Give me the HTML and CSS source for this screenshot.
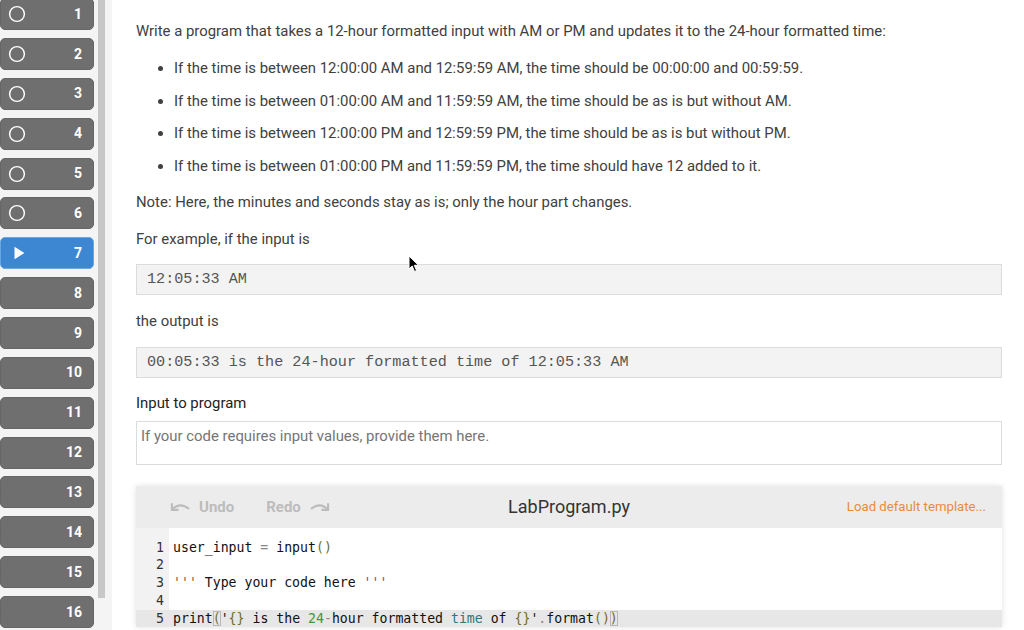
FILE: index.html
```html
<!DOCTYPE html>
<html>
<head>
<meta charset="utf-8">
<link rel="stylesheet" href="styles.css">
</head>
<body>
<div class="app">
  <aside class="sidebar">
    <div class="steps">
      <div class="step"><svg class="ring" viewBox="0 0 20 20"><circle cx="10" cy="10" r="8.2"/></svg><span class="num">1</span></div>
      <div class="step"><svg class="ring" viewBox="0 0 20 20"><circle cx="10" cy="10" r="8.2"/></svg><span class="num">2</span></div>
      <div class="step"><svg class="ring" viewBox="0 0 20 20"><circle cx="10" cy="10" r="8.2"/></svg><span class="num">3</span></div>
      <div class="step"><svg class="ring" viewBox="0 0 20 20"><circle cx="10" cy="10" r="8.2"/></svg><span class="num">4</span></div>
      <div class="step"><svg class="ring" viewBox="0 0 20 20"><circle cx="10" cy="10" r="8.2"/></svg><span class="num">5</span></div>
      <div class="step"><svg class="ring" viewBox="0 0 20 20"><circle cx="10" cy="10" r="8.2"/></svg><span class="num">6</span></div>
      <div class="step active"><svg class="play" viewBox="0 0 20 20"><path d="M5 3 L16 10 L5 17 Z"/></svg><span class="num">7</span></div>
      <div class="step"><span class="num">8</span></div>
      <div class="step"><span class="num">9</span></div>
      <div class="step"><span class="num">10</span></div>
      <div class="step"><span class="num">11</span></div>
      <div class="step"><span class="num">12</span></div>
      <div class="step"><span class="num">13</span></div>
      <div class="step"><span class="num">14</span></div>
      <div class="step"><span class="num">15</span></div>
      <div class="step"><span class="num">16</span></div>
    </div>
    <div class="scrollbar"></div>
  </aside>
  <main class="content">
    <p class="p-intro">Write a program that takes a 12-hour formatted input with AM or PM and updates it to the 24-hour formatted time:</p>
    <ul class="rules">
      <li>If the time is between 12:00:00 AM and 12:59:59 AM, the time should be 00:00:00 and 00:59:59.</li>
      <li>If the time is between 01:00:00 AM and 11:59:59 AM, the time should be as is but without AM.</li>
      <li>If the time is between 12:00:00 PM and 12:59:59 PM, the time should be as is but without PM.</li>
      <li>If the time is between 01:00:00 PM and 11:59:59 PM, the time should have 12 added to it.</li>
    </ul>
    <p class="p-note">Note: Here, the minutes and seconds stay as is; only the hour part changes.</p>
    <p class="p-ex">For example, if the input is</p>
    <pre class="sample">12:05:33 AM</pre>
    <p class="p-out">the output is</p>
    <pre class="sample">00:05:33 is the 24-hour formatted time of 12:05:33 AM</pre>
    <div class="input-label">Input to program</div>
    <div class="input-box">If your code requires input values, provide them here.</div>
    <section class="editor">
      <div class="toolbar">
        <div class="tb-left">
          <span class="tb-btn"><svg class="ico" viewBox="0 0 22 12"><path d="M2 2 V9 H9"/><path d="M2.5 8.5 C7 3.5 13 2.5 20 8"/></svg>Undo</span>
          <span class="tb-btn redo">Redo<svg class="ico" viewBox="0 0 22 12"><path d="M20 2 V9 H13"/><path d="M19.5 8.5 C15 3.5 9 2.5 2 8"/></svg></span>
        </div>
        <div class="filename">LabProgram.py</div>
        <div class="tb-right"><span class="load">Load default template...</span></div>
      </div>
      <div class="code">
        <div class="line"><span class="gut">1</span><span class="src">user_input <span class="op">=</span> input<span class="br">()</span></span></div>
        <div class="line"><span class="gut">2</span><span class="src"></span></div>
        <div class="line"><span class="gut">3</span><span class="src"><span class="str">'''</span> Type your code here <span class="str">'''</span></span></div>
        <div class="line"><span class="gut">4</span><span class="src"></span></div>
        <div class="line cur"><span class="gut">5</span><span class="src">print<span class="br match">(</span>'<span class="br">{}</span> is the <span class="num2">24</span><span class="op">-</span>hour formatted <span class="kw">time</span> of <span class="br">{}</span>'<span class="op">.</span>format<span class="br">()</span><span class="br match">)</span></span></div>
      </div>
    </section>
  </main>
</div>
<svg class="pointer" viewBox="0 0 12 18"><path d="M1 1 L1 14 L4.2 11 L6.5 16.5 L8.6 15.6 L6.3 10.3 L10.5 10.3 Z"/></svg>
</body>
</html>
```
FILE: styles.css
```css
* { box-sizing: border-box; }
html, body { margin: 0; padding: 0; }
body {
  width: 1024px;
  height: 630px;
  overflow: hidden;
  background: #ffffff;
  font-family: Roboto, "Liberation Sans", sans-serif;
  color: #404040;
  position: relative;
}
.app { display: flex; height: 630px; }

.sidebar {
  width: 112px;
  flex: none;
  background: #f4f4f4;
  display: flex;
  align-items: flex-start;
}
.steps {
  width: 94px;
  display: flex;
  flex-direction: column;
  gap: 7.86px;
  margin-top: -1.86px;
}
.step {
  height: 32px;
  flex: none;
  border-radius: 5px;
  background: #6f6f6f;
  color: #fff;
  display: flex;
  align-items: center;
  padding: 0 11px 0 7px;
  border: 1px solid #666;
}
.step.active {
  background: #3d87d2;
  border-color: #6aa6e0;
}
.ring { width: 18px; height: 18px; fill: none; stroke: #fff; stroke-width: 1.6; }
.play { width: 18px; height: 18px; fill: #fff; margin-left: 2px; }
.num {
  margin-left: auto;
  font-weight: 700;
  font-size: 14px;
  margin-top: -1px;
}
.scrollbar {
  width: 7px;
  height: 598px;
  margin-left: 4px;
  background: #c7c7c7;
}

.content {
  flex: 1;
  padding: 0 22px 0 24px;
  font-size: 14.9px;
  line-height: 20px;
}
.content p { margin: 0; }
.p-intro { margin-top: 21px !important; }
.rules {
  margin: 17px 0 0;
  padding-left: 38px;
}
.rules li { margin-bottom: 12.5px; }
.rules li:last-child { margin-bottom: 0; }
.p-note { margin-top: 16px !important; }
.p-ex { margin-top: 17px !important; }
.p-out { margin-top: 16px !important; }
.sample {
  margin: 15px 0 0;
  height: 31px;
  padding: 5px 10px;
  background: #f3f3f3;
  border: 1px solid #dcdcdc;
  font-family: "Liberation Mono", monospace;
  font-size: 15.15px;
  line-height: 19px;
  color: #555;
}
.p-out + .sample { margin-top: 16px; }
.input-label {
  margin-top: 15px;
  color: #222;
}
.input-box {
  margin-top: 8px;
  height: 44px;
  border: 1px solid #d9dddd;
  padding: 4px 4px;
  color: #757575;
}

.editor {
  margin-top: 21px;
  box-shadow: 0 0 6px rgba(0,0,0,0.12);
  background: #fff;
}
.toolbar {
  height: 42px;
  background: #ececec;
  display: grid;
  grid-template-columns: 1fr auto 1fr;
  align-items: center;
  padding: 0 16px;
}
.tb-left { display: flex; align-items: center; gap: 32px; margin-left: 18px; }
.tb-btn {
  display: flex;
  align-items: center;
  gap: 8px;
  font-weight: 700;
  font-size: 15px;
  color: #bcbcbc;
}
.ico { width: 21px; height: 12px; fill: none; stroke: #bcbcbc; stroke-width: 2.2; }
.filename { font-size: 18px; color: #333; }
.tb-right { text-align: right; }
.load { font-size: 13.2px; color: #e98b3d; }

.code {
  padding-top: 11px;
  background: linear-gradient(to right, #f2f2f2 0, #f2f2f2 33px, #fff 33px);
  font-family: "DejaVu Sans Mono", monospace;
  font-size: 13.2px;
  line-height: 17.8px;
  color: #111;
}
.line { display: flex; height: 17.8px; white-space: pre; }
.line.cur { background: #e7e7e7; }
.gut {
  width: 33px;
  padding-right: 5px;
  text-align: right;
  color: #333;
  flex: none;
}
.src { padding-left: 4px; }
.op { color: #888; }
.br { color: #6f6e25; }
.match { outline: 1px solid #b8b8b8; outline-offset: -1px; }
.str { color: #a0502a; }
.num2 { color: #3c9a3c; }
.kw { color: #2b7a7a; }

.pointer {
  position: absolute;
  left: 408px;
  top: 255px;
  width: 12px;
  height: 18px;
  fill: #000;
  stroke: #fff;
  stroke-width: 1;
}
```
